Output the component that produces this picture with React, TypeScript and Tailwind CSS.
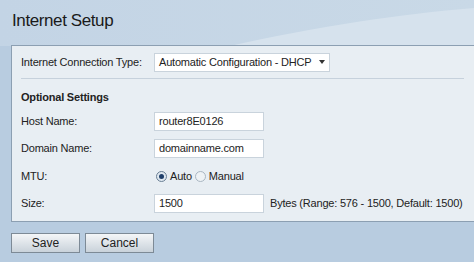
import React from "react";

type Row = {
  label: string;
  value: string;
};

const InputBox = ({ value }: { value: string }) => (
  <div className="w-[110px] h-[19px] shrink-0 bg-white border border-[#c9d3dc] px-[4px] flex items-center text-[#222]">
    {value}
  </div>
);

const App = () => {
  const rows: Row[] = [
    { label: "Host Name:", value: "router8E0126" },
    { label: "Domain Name:", value: "domainname.com" },
  ];

  return (
    <div
      className="w-[474px] h-[262px] overflow-hidden bg-[#b8cce0] relative whitespace-nowrap"
      style={{ fontFamily: '"Liberation Sans", Arial, sans-serif' }}
    >
      {/* header swoosh */}
      <svg
        className="absolute left-0 top-0"
        width="474"
        height="46"
        viewBox="0 0 474 46"
      >
        <defs>
          <linearGradient id="hd" x1="0" y1="0" x2="1" y2="0">
            <stop offset="0" stopColor="#c3d4e5" />
            <stop offset="1" stopColor="#c9d9e7" />
          </linearGradient>
        </defs>
        <rect width="474" height="46" fill="url(#hd)" />
        <path d="M230 46 C 320 26, 400 14, 474 8 L474 46 Z" fill="#d6e2ed" />
      </svg>

      <div className="relative">
        <div className="h-[45px] pl-[12px] pt-[9px] text-[17px] tracking-[-0.4px] text-[#1a1a1a] leading-[24px]">
          Internet Setup
        </div>

        <div className="ml-[11px] h-[177px] bg-[#e8eef3] border-t border-l border-b border-[#8c9fb2] pl-[9px] pr-[10px] text-[11px] tracking-[-0.2px] text-[#222]">
          <div className="h-[32px] flex items-center">
            <div className="w-[133px] shrink-0">Internet Connection Type:</div>
            <div className="w-[176px] h-[19px] shrink-0 bg-white border border-[#c9d3dc] pl-[4px] pr-[4px] flex items-center justify-between">
              <span>Automatic Configuration - DHCP</span>
              <svg width="6" height="4" viewBox="0 0 6 4">
                <path d="M0 0 L6 0 L3 4 Z" fill="#333" />
              </svg>
            </div>
          </div>
          <div className="border-t border-[#c6d1dc]" />

          <div className="h-[29px] pt-[10px] font-bold">Optional Settings</div>

          {rows.map((row, idx) => (
            <div key={idx} className="h-[27px] flex items-center">
              <div className="w-[133px] shrink-0">{row.label}</div>
              <InputBox value={row.value} />
            </div>
          ))}

          <div className="h-[28px] flex items-center">
            <div className="w-[135px] shrink-0">MTU:</div>
            <span className="w-[11px] h-[11px] shrink-0 rounded-full border border-[#6a7f94] bg-[#dfe8f0] flex items-center justify-center mr-[3px]">
              <span className="w-[5px] h-[5px] rounded-full bg-[#1f3f6a]" />
            </span>
            <span className="mr-[3px]">Auto</span>
            <span className="w-[11px] h-[11px] shrink-0 rounded-full border border-[#a9b6c2] bg-[#eef2f5] mr-[3px]" />
            <span>Manual</span>
          </div>

          <div className="h-[27px] flex items-center">
            <div className="w-[133px] shrink-0">Size:</div>
            <InputBox value="1500" />
            <span className="ml-[6px]">Bytes (Range: 576 - 1500, Default: 1500)</span>
          </div>
        </div>

        <div className="flex gap-[5px] ml-[11px] mt-[11px]">
          <button className="w-[69px] h-[20px] border border-[#7d8a96] bg-gradient-to-b from-[#f4f6f8] to-[#c9d2da] text-[12px] text-[#222]">
            Save
          </button>
          <button className="w-[69px] h-[20px] border border-[#7d8a96] bg-gradient-to-b from-[#f4f6f8] to-[#c9d2da] text-[12px] text-[#222]">
            Cancel
          </button>
        </div>
      </div>
    </div>
  );
};

export default App;
